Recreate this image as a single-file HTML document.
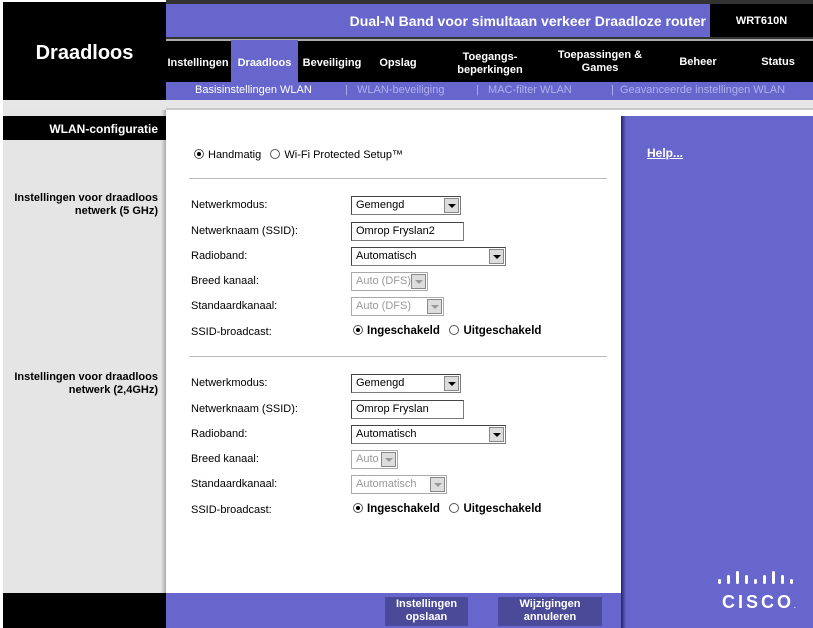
<!DOCTYPE html><html><head><style>
*{margin:0;padding:0;box-sizing:border-box}
body{width:813px;height:628px;position:relative;background:#fff;font-family:"Liberation Sans",Arial,sans-serif;overflow:hidden}
.a{position:absolute}
.p{background:#6666cc}
.k{background:#000}
.w{color:#fff;font-weight:bold}
.l{font-size:11px;color:#000}
.sel{position:absolute;height:19px;border:1px solid #7a7a7a;border-top-color:#444;border-left-color:#444;background:#fff;font-size:11px;padding:2px 4px;color:#000}
.sel i{position:absolute;right:1px;top:1px;width:15px;height:15px;background:#ddd;border:1px solid #888}
.sel i:after{content:"";position:absolute;left:3px;top:5px;border:4px solid transparent;border-top:4px solid #000}
.dis{color:#999;background:#fff;border-color:#aaa}
.dis i:after{border-top-color:#999}
.rad{display:inline-block;width:10px;height:10px;border-radius:50%;border:1px solid #555;vertical-align:-1px;margin-right:4px;position:relative;background:#fff}
.rad.on:after{content:"";position:absolute;left:2px;top:2px;width:4px;height:4px;border-radius:50%;background:#000}
.nav{font-size:11px;text-align:center;line-height:13px}
.sub{font-size:11px;color:#b0b0ee}
</style></head><body>
<div class="a k" style="left:3px;top:2px;width:163px;height:98px"></div>
<div class="a w" style="left:3px;top:42px;width:163px;text-align:center;font-size:20px">Draadloos</div>
<div class="a p" style="left:166px;top:4px;width:544px;height:33px"></div>
<div class="a k" style="left:166px;top:0;width:647px;height:4px;background:#333"></div>
<div class="a w" style="left:166px;top:13px;width:540px;text-align:right;font-size:14px">Dual-N Band voor simultaan verkeer Draadloze router</div>
<div class="a k" style="left:710px;top:4px;width:103px;height:33px"></div>
<div class="a w" style="left:710px;top:15px;width:103px;text-align:center;font-size:11px">WRT610N</div>
<div class="a" style="left:166px;top:37px;width:647px;height:3px;background:#333"></div>
<div class="a" style="left:166px;top:39px;width:647px;height:2px;background:#aaa"></div>
<div class="a k" style="left:166px;top:41px;width:647px;height:41px"></div>
<div class="a p" style="left:231px;top:40px;width:67px;height:42px"></div>
<div class="a nav w" style="left:165px;top:57px;width:66px">Instellingen</div>
<div class="a nav w" style="left:231px;top:57px;width:67px">Draadloos</div>
<div class="a nav w" style="left:299px;top:57px;width:66px">Beveiliging</div>
<div class="a nav w" style="left:368px;top:57px;width:60px">Opslag</div>
<div class="a nav w" style="left:445px;top:51px;width:90px">Toegangs-<br>beperkingen</div>
<div class="a nav w" style="left:550px;top:49px;width:100px">Toepassingen &amp;<br>Games</div>
<div class="a nav w" style="left:668px;top:56px;width:60px">Beheer</div>
<div class="a nav w" style="left:748px;top:56px;width:60px">Status</div>
<div class="a p" style="left:166px;top:82px;width:647px;height:18px"></div>
<div class="a sub" style="left:195px;top:84px;color:#fff">Basisinstellingen WLAN</div>
<div class="a sub" style="left:345px;top:84px">|&nbsp;&nbsp; WLAN-beveiliging</div>
<div class="a sub" style="left:476px;top:84px">|&nbsp;&nbsp; MAC-filter WLAN</div>
<div class="a sub" style="left:611px;top:84px">|&nbsp; Geavanceerde instellingen WLAN</div>
<div class="a" style="left:3px;top:100px;width:810px;height:10px;background:#e6e6e6"></div>
<div class="a" style="left:166px;top:108px;width:647px;height:2px;background:#c8c8c8"></div>
<div class="a" style="left:3px;top:110px;width:163px;height:483px;background:#e5e5e5"></div>
<div class="a" style="left:161px;top:110px;width:5px;height:483px;background:linear-gradient(to right,#e5e5e5,#aaa)"></div>
<div class="a k" style="left:3px;top:116px;width:163px;height:24px"></div>
<div class="a w" style="left:3px;top:122px;width:155px;text-align:right;font-size:12px">WLAN-configuratie</div>
<div class="a w" style="left:3px;top:192px;width:155px;text-align:right;font-size:11px;color:#000;line-height:13px">Instellingen voor draadloos<br>netwerk (5 GHz)</div>
<div class="a w" style="left:3px;top:371px;width:155px;text-align:right;font-size:11px;color:#000;line-height:13px">Instellingen voor draadloos<br>netwerk (2,4GHz)</div>
<div class="a p" style="left:621px;top:116px;width:192px;height:512px"></div>
<div class="a" style="left:621px;top:116px;width:5px;height:512px;background:linear-gradient(to right,#222266,#6666cc)"></div>
<div class="a" style="left:647px;top:146px;color:#fff;font-size:12px;font-weight:bold;text-decoration:underline">Help...</div>
<div class="a l" style="left:194px;top:149px"><span class="rad on"></span>Handmatig &nbsp;&nbsp;<span class="rad"></span>Wi-Fi Protected Setup™</div>
<div class="a" style="left:189px;top:178px;width:418px;height:1px;background:#bbb"></div>
<div class="a" style="left:189px;top:356px;width:418px;height:1px;background:#bbb"></div>
<div class="a l" style="left:191px;top:199px">Netwerkmodus:</div>
<div class="a l" style="left:191px;top:225px">Netwerknaam (SSID):</div>
<div class="a l" style="left:191px;top:250px">Radioband:</div>
<div class="a l" style="left:191px;top:275px">Breed kanaal:</div>
<div class="a l" style="left:191px;top:300px">Standaardkanaal:</div>
<div class="a l" style="left:191px;top:326px">SSID-broadcast:</div>
<div class="sel" style="left:351px;top:196px;width:110px">Gemengd<i></i></div>
<div class="sel" style="left:351px;top:222px;width:113px">Omrop Fryslan2</div>
<div class="sel" style="left:351px;top:247px;width:155px">Automatisch<i></i></div>
<div class="sel dis" style="left:351px;top:272px;width:77px">Auto (DFS)<i></i></div>
<div class="sel dis" style="left:351px;top:297px;width:93px">Auto (DFS)<i></i></div>
<div class="a l" style="left:353px;top:325px;font-weight:bold;font-size:11.5px"><span class="rad on"></span>Ingeschakeld &nbsp;&nbsp;<span class="rad"></span>Uitgeschakeld</div>
<div class="a l" style="left:191px;top:377px">Netwerkmodus:</div>
<div class="a l" style="left:191px;top:403px">Netwerknaam (SSID):</div>
<div class="a l" style="left:191px;top:428px">Radioband:</div>
<div class="a l" style="left:191px;top:453px">Breed kanaal:</div>
<div class="a l" style="left:191px;top:478px">Standaardkanaal:</div>
<div class="a l" style="left:191px;top:504px">SSID-broadcast:</div>
<div class="sel" style="left:351px;top:374px;width:110px">Gemengd<i></i></div>
<div class="sel" style="left:351px;top:400px;width:113px">Omrop Fryslan</div>
<div class="sel" style="left:351px;top:425px;width:155px">Automatisch<i></i></div>
<div class="sel dis" style="left:351px;top:450px;width:47px">Auto<i></i></div>
<div class="sel dis" style="left:351px;top:475px;width:96px">Automatisch<i></i></div>
<div class="a l" style="left:353px;top:503px;font-weight:bold;font-size:11.5px"><span class="rad on"></span>Ingeschakeld &nbsp;&nbsp;<span class="rad"></span>Uitgeschakeld</div>
<div class="a k" style="left:3px;top:593px;width:163px;height:35px"></div>
<div class="a p" style="left:166px;top:593px;width:455px;height:35px"></div>
<div class="a nav" style="left:385px;top:597px;width:83px;height:29px;background:#4a4a99;color:#fff;font-weight:bold;padding-top:1px">Instellingen<br>opslaan</div>
<div class="a nav" style="left:498px;top:597px;width:104px;height:29px;background:#4a4a99;color:#fff;font-weight:bold;padding-top:1px">Wijzigingen<br>annuleren</div>
<svg class="a" style="left:716px;top:571px" width="80" height="16"><g fill="#fff">
<rect x="2" y="8" width="3" height="5" rx="1.5"/><rect x="11" y="4" width="3" height="9" rx="1.5"/><rect x="20" y="0" width="3" height="13" rx="1.5"/><rect x="29" y="4" width="3" height="9" rx="1.5"/><rect x="38" y="8" width="3" height="5" rx="1.5"/><rect x="47" y="4" width="3" height="9" rx="1.5"/><rect x="56" y="0" width="3" height="13" rx="1.5"/><rect x="65" y="4" width="3" height="9" rx="1.5"/><rect x="74" y="8" width="3" height="5" rx="1.5"/></g></svg>
<div class="a w" style="left:722px;top:592px;font-size:18px;letter-spacing:3px">CISCO<span style="font-size:6px">.</span></div>
</body></html>
